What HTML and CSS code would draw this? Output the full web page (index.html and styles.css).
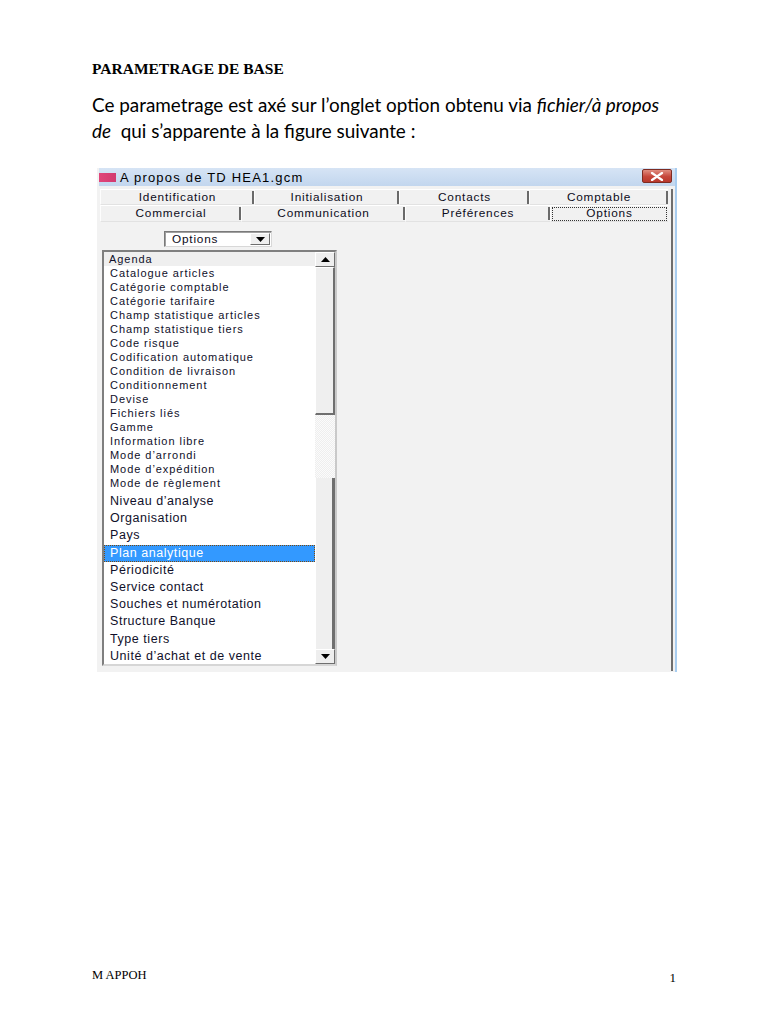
FILE: index.html
```html
<!DOCTYPE html>
<html lang="fr">
<head>
<meta charset="utf-8">
<title>PARAMETRAGE DE BASE</title>
<link rel="stylesheet" href="styles.css">
</head>
<body>
<div class="page">
  <h1 class="heading">PARAMETRAGE DE BASE</h1>
  <p class="intro">Ce parametrage est axé sur l’onglet option obtenu via <em>fichier/à propos</em><br><em>de</em>&nbsp; qui s’apparente à la figure suivante :</p>

  <div class="window">
    <div class="titlebar">
      <span class="app-icon"></span>
      <span class="title">A propos de TD HEA1.gcm</span>
      <span class="close">
        <svg width="16" height="9" viewBox="0 0 16 9"><path d="M3 1 L13 8 M13 1 L3 8" stroke="#fff" stroke-width="2.2" stroke-linecap="round"/></svg>
      </span>
    </div>

    <div class="panel">
      <div class="tabrow row1">
        <div class="tab">Identification</div>
        <div class="tab">Initialisation</div>
        <div class="tab">Contacts</div>
        <div class="tab">Comptable</div>
      </div>
      <div class="tabrow row2">
        <div class="tab">Commercial</div>
        <div class="tab">Communication</div>
        <div class="tab">Préférences</div>
        <div class="tab active"><span class="focus">Options</span></div>
      </div>

      <div class="content">
        <div class="combo">
          <span class="combo-text">Options</span>
          <span class="combo-btn"><svg width="9" height="5" viewBox="0 0 9 5"><path d="M0 0 H9 L4.5 5 Z" fill="#000"/></svg></span>
        </div>

        <div class="listbox">
          <ul class="items">
            <li class="item small first">Agenda</li>
            <li class="item small">Catalogue articles</li>
            <li class="item small">Catégorie comptable</li>
            <li class="item small">Catégorie tarifaire</li>
            <li class="item small">Champ statistique articles</li>
            <li class="item small">Champ statistique tiers</li>
            <li class="item small">Code risque</li>
            <li class="item small">Codification automatique</li>
            <li class="item small">Condition de livraison</li>
            <li class="item small">Conditionnement</li>
            <li class="item small">Devise</li>
            <li class="item small">Fichiers liés</li>
            <li class="item small">Gamme</li>
            <li class="item small">Information libre</li>
            <li class="item small">Mode d’arrondi</li>
            <li class="item small">Mode d’expédition</li>
            <li class="item small last-small">Mode de règlement</li>
            <li class="item large">Niveau d’analyse</li>
            <li class="item large">Organisation</li>
            <li class="item large">Pays</li>
            <li class="item large selected"><span class="sel">Plan analytique</span></li>
            <li class="item large">Périodicité</li>
            <li class="item large">Service contact</li>
            <li class="item large">Souches et numérotation</li>
            <li class="item large">Structure Banque</li>
            <li class="item large">Type tiers</li>
            <li class="item large">Unité d’achat et de vente</li>
          </ul>
          <div class="scrollbar">
            <div class="sb-btn"><svg width="9" height="5" viewBox="0 0 9 5"><path d="M4.5 0 L9 5 H0 Z" fill="#000"/></svg></div>
            <div class="sb-thumb"></div>
            <div class="sb-track"></div>
            <div class="sb-lower"></div>
            <div class="sb-btn"><svg width="9" height="5" viewBox="0 0 9 5"><path d="M0 0 H9 L4.5 5 Z" fill="#000"/></svg></div>
          </div>
        </div>
      </div>
    </div>
  </div>

  <div class="footer">
    <span class="author">M APPOH</span>
    <span class="pagenum">1</span>
  </div>
</div>
</body>
</html>
```

FILE: styles.css
```css
* { box-sizing: border-box; }

body {
  margin: 0;
  background: #ffffff;
  font-family: "Liberation Sans", Arial, sans-serif;
  color: #000;
}

.page {
  width: 768px;
  height: 1024px;
  padding: 60px 0 0 92px;
  position: relative;
}

.heading {
  margin: 0;
  font-family: "Liberation Serif", "Times New Roman", serif;
  font-weight: bold;
  font-size: 15.5px;
  line-height: 18px;
}

.intro {
  margin: 14px 0 0 0;
  font-family: Lato, "Open Sans", sans-serif;
  font-size: 18.9px;
  line-height: 26px;
  color: #000;
}

.intro em { font-style: italic; }

/* ---------- dialog window ---------- */
.window {
  margin: 24px 0 0 5px;
  width: 580px;
  height: 504px;
  background: #f2f2f2;
  border-right: 2px solid #a8cdf0;
  display: flex;
  flex-direction: column;
}

.titlebar {
  height: 18px;
  margin-left: 2px;
  background: linear-gradient(#d6e4f5, #c2d6ee);
  display: flex;
  align-items: center;
  position: relative;
}

.app-icon {
  width: 17px;
  height: 9px;
  background: linear-gradient(90deg, #e0457a, #d23a6f);
  margin-right: 4px;
}

.title {
  font-size: 13px;
  letter-spacing: 1.2px;
  color: #000;
}

.close {
  position: absolute;
  right: 3px;
  top: 1px;
  width: 30px;
  height: 14px;
  background: linear-gradient(#e08d80, #c6463a 55%, #b8382c);
  border: 1px solid #7d2b22;
  border-radius: 2px;
  display: flex;
  align-items: center;
  justify-content: center;
}

.panel {
  margin: 3px 0 1px 3px;
  width: 573px;
  flex: 1;
  border-right: 2px solid #6e6e6e;
  display: flex;
  flex-direction: column;
}

.tabrow {
  display: grid;
  height: 16px;
}

.row1 { grid-template-columns: 154px 145px 130px 139px; }
.row2 { grid-template-columns: 141px 164px 145px 118px; }

.tab {
  font-size: 11.8px;
  letter-spacing: 0.8px;
  line-height: 14px;
  text-align: center;
  color: #0b0b20;
  background: #f1f1f1;
  border-top: 1px solid #ffffff;
  border-left: 1px solid #fdfdfd;
  border-bottom: 1px solid #e2e2e2;
  position: relative;
}

.tab::after {
  content: "";
  position: absolute;
  right: 0;
  top: 1px;
  width: 2px;
  height: 13px;
  background: #6a6a6a;
}

.row2 .tab.active::after { display: none; }

.tab.active { padding: 1px 1px 0 1px; }

.focus {
  display: block;
  height: 14px;
  line-height: 11px;
  border: 1px dotted #333;
}

.content {
  flex: 1;
  padding: 10px 0 0 2px;
  display: flex;
  flex-direction: column;
}

.combo {
  margin-left: 62px;
  width: 108px;
  height: 16px;
  background: #fff;
  border: 1px solid #7a7a7a;
  border-right-color: #d8d8d8;
  border-bottom-color: #d8d8d8;
  box-shadow: inset 1px 1px 0 #a0a0a0;
  display: flex;
  align-items: center;
  justify-content: space-between;
}

.combo-text {
  padding-left: 7px;
  font-size: 11.8px;
  letter-spacing: 0.8px;
  color: #0b0b20;
}

.combo-btn {
  width: 20px;
  height: 12px;
  margin-right: 1px;
  background: #efefef;
  border: 1px solid #fff;
  border-right-color: #6e6e6e;
  border-bottom-color: #6e6e6e;
  display: flex;
  align-items: center;
  justify-content: center;
}

.listbox {
  margin-top: 3px;
  width: 235px;
  height: 416px;
  background: #fff;
  border: 2px solid #7f7f7f;
  border-right-color: #c9c9c9;
  border-bottom-color: #d6d6d6;
  display: flex;
}

.items {
  list-style: none;
  margin: 0;
  padding: 0;
  flex: 1;
}

.item {
  padding-left: 6px;
  color: #10102a;
  white-space: nowrap;
}

.item.small {
  height: 14px;
  line-height: 14px;
  font-size: 11px;
  letter-spacing: 0.95px;
}

.item.first { background: #efefef; padding-left: 5px; }

.item.last-small { margin-bottom: 3px; }

.item.large {
  height: 17.2px;
  line-height: 17px;
  font-size: 12.5px;
  letter-spacing: 0.55px;
}

.item.selected { padding-left: 0; }

.sel {
  display: block;
  height: 17px;
  padding-left: 5px;
  background: #3399ff;
  color: #fff;
  border: 1px dotted #7a4a10;
  line-height: 15px;
}

.scrollbar {
  width: 20px;
  display: flex;
  flex-direction: column;
  background: #f4f4f4;
}

.sb-btn {
  height: 15px;
  background: #eeeeee;
  border: 1px solid #ffffff;
  border-right-color: #6f6f6f;
  border-bottom-color: #6f6f6f;
  display: flex;
  align-items: center;
  justify-content: center;
}

.sb-thumb {
  height: 148px;
  background: #efefef;
  border: 1px solid #ffffff;
  border-right: 2px solid #6f6f6f;
  border-bottom: 2px solid #6f6f6f;
}

.sb-track {
  height: 63px;
  background-color: #f7f7f7;
  background-image: repeating-conic-gradient(#eeeeee 0 25%, #fbfbfb 0 50%);
  background-size: 2px 2px;
}

.sb-lower {
  flex: 1;
  background: #efefef;
  border-left: 1px solid #ffffff;
  border-right: 3px solid #6f6f6f;
}

/* ---------- footer ---------- */
.footer {
  position: absolute;
  left: 92px;
  top: 968px;
  width: 584px;
  display: flex;
  justify-content: space-between;
  font-family: "Liberation Serif", "Times New Roman", serif;
  font-size: 12.5px;
}

.pagenum { font-size: 13px; padding-top: 2px; }
```
